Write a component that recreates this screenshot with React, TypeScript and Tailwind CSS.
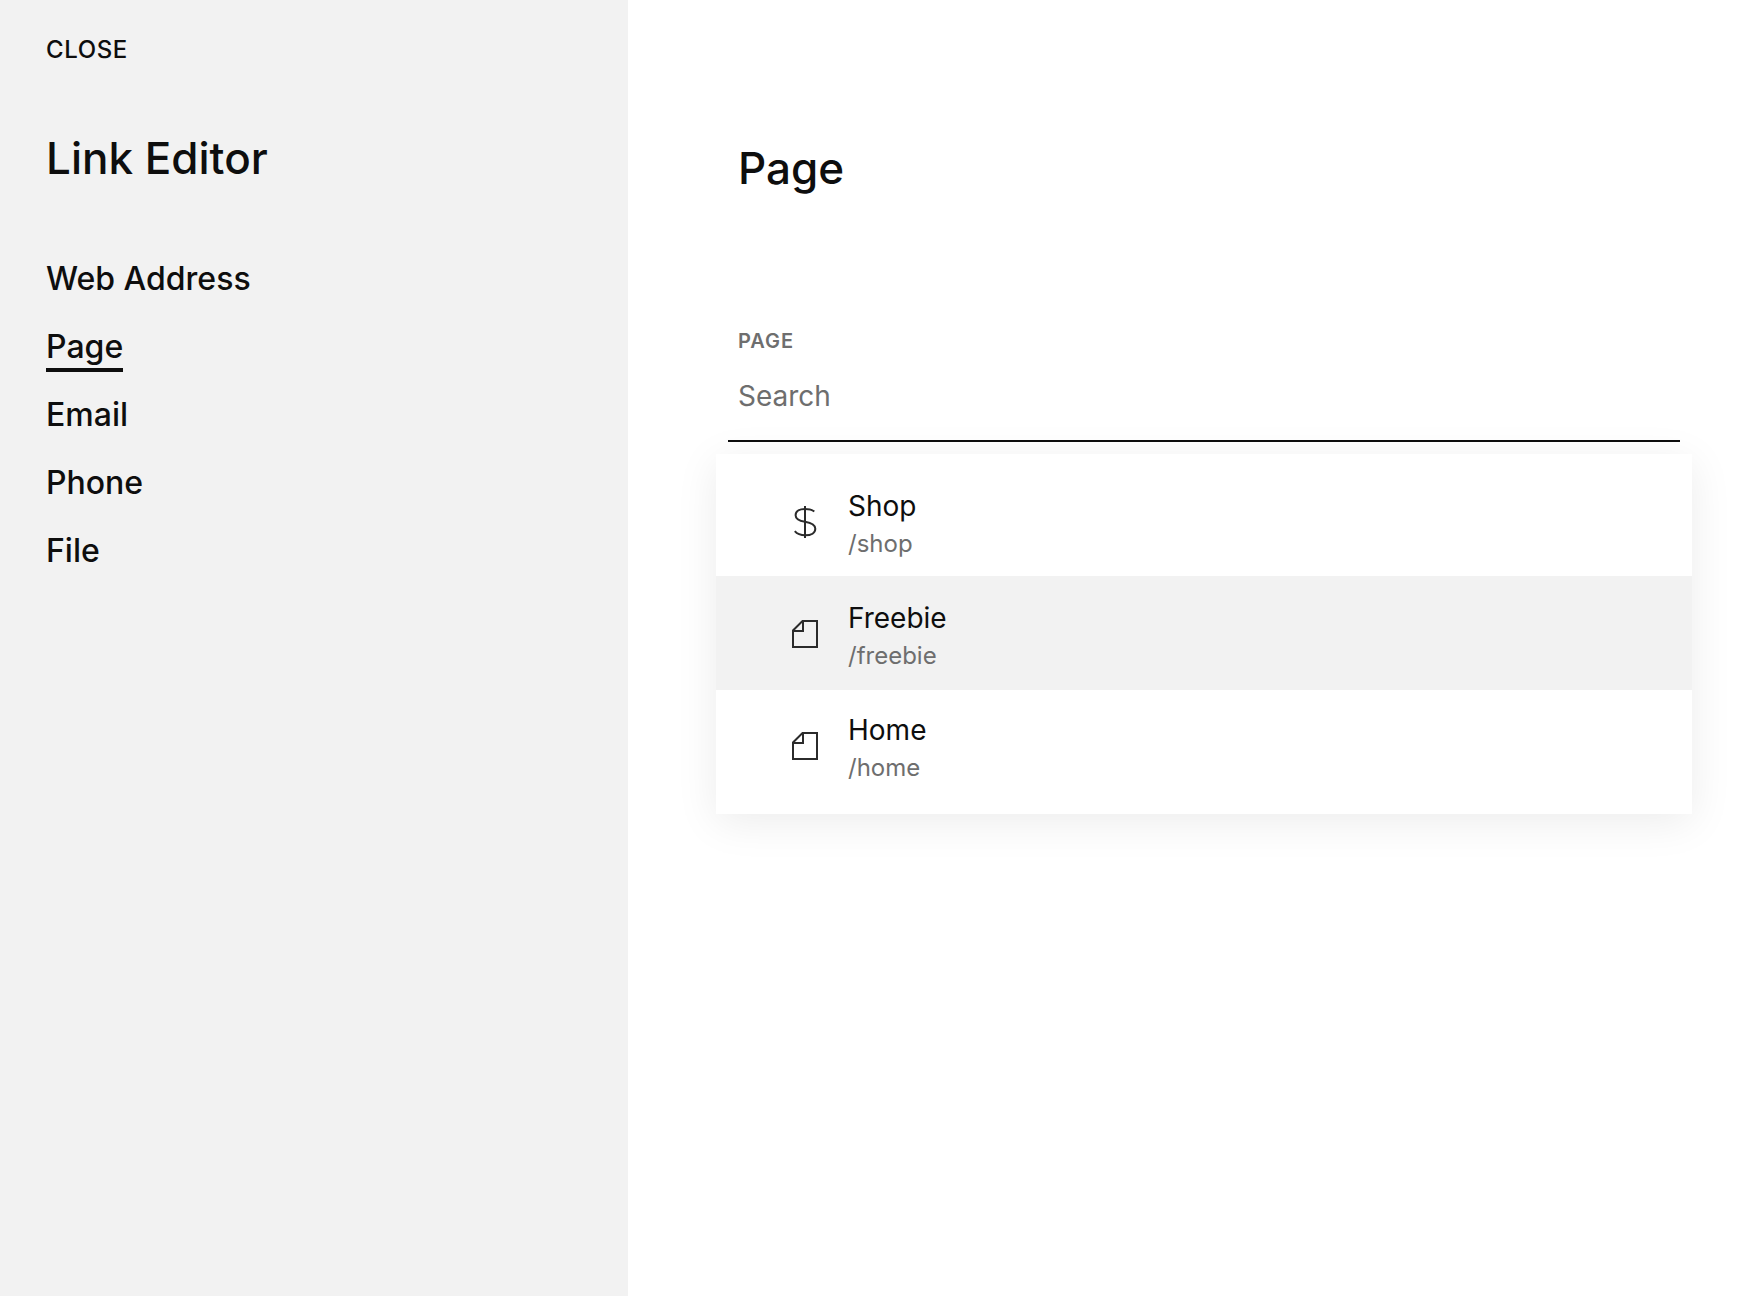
import { useState } from 'react';
import { clsx } from 'clsx';

interface PageOption {
  id: string;
  title: string;
  path: string;
  kind: 'store' | 'page';
}

const linkTypes = ['Web Address', 'Page', 'Email', 'Phone', 'File'];

const pages: PageOption[] = [
  { id: 'shop', title: 'Shop', path: '/shop', kind: 'store' },
  { id: 'freebie', title: 'Freebie', path: '/freebie', kind: 'page' },
  { id: 'home', title: 'Home', path: '/home', kind: 'page' },
];

function StoreIcon() {
  return (
    <svg className="w-8 h-[34px] shrink-0" viewBox="0 0 32 34" fill="none" stroke="#2b2b2b" strokeWidth="2" aria-hidden="true">
      <path d="M16 2v32" />
      <path d="M25.3 7.6C23.2 5.7 20 4.900 16 4.900c-5.600 0-9.400 2.400-9.400 6.300 0 4.200 4 5.700 9.400 6.600 6 1 10.300 2.600 10.300 7 0 4-4 6.500-10 6.500-4.600 0-8.300-1.400-10.500-4.100" />
    </svg>
  );
}

function PageIcon() {
  return (
    <svg className="w-8 h-[34px] shrink-0" viewBox="0 0 32 34" fill="none" stroke="#2b2b2b" strokeWidth="2" aria-hidden="true">
      <path d="M13.500 5H28v26H4V14.500z" />
      <path d="M14 5v10H4" />
    </svg>
  );
}

function Sidebar({ active, onSelect }: { active: string; onSelect: (type: string) => void }) {
  return (
    <aside className="w-[628px] shrink-0 bg-[#f2f2f2] pl-[46px] pt-[34px]">
      <button type="button" className="block text-2xl leading-8 font-medium tracking-wide">CLOSE</button>
      <h1 className="mt-[66px] text-[44px] leading-[52px] font-medium">Link Editor</h1>
      <nav className="mt-[75px] flex flex-col items-start gap-[23px]">
        {linkTypes.map((type) => (
          <a
            key={type}
            href="#"
            onClick={(e) => { e.preventDefault(); onSelect(type); }}
            className={clsx(
              'border-b-4 pb-px text-[32px] leading-10 font-medium',
              type === active ? 'border-[#0e0e0e]' : 'border-transparent'
            )}
          >
            {type}
          </a>
        ))}
      </nav>
    </aside>
  );
}

function PageRow({ page, highlighted, onHover }: { page: PageOption; highlighted: boolean; onHover: () => void }) {
  return (
    <li>
      <button
        type="button"
        onMouseEnter={onHover}
        className={clsx(
          'flex w-full h-[114px] items-center gap-[27px] pl-[73px] text-left',
          highlighted && 'bg-[#f2f2f2]'
        )}
      >
        {page.kind === 'store' ? <StoreIcon /> : <PageIcon />}
        <span className="flex flex-col pt-2">
          <span className="text-[28px] leading-[37px]">{page.title}</span>
          <span className="text-2xl leading-[38px] text-[#6e6e6e]">{page.path}</span>
        </span>
      </button>
    </li>
  );
}

export default function App() {
  const [linkType, setLinkType] = useState('Page');
  const [query, setQuery] = useState('');
  const [highlighted, setHighlighted] = useState('freebie');

  const results = pages.filter((page) => page.title.toLowerCase().includes(query.toLowerCase()));

  return (
    <div className="flex min-h-screen bg-white font-['Inter',sans-serif] text-[#0e0e0e]">
      <Sidebar active={linkType} onSelect={setLinkType} />
      <main className="min-w-0 flex-1 pt-[142px] pl-[100px] pr-[84px]">
        <h2 className="px-[10px] text-[44px] leading-[52px] font-medium">{linkType}</h2>
        <div className="relative mt-[135px]">
          <label htmlFor="page-search" className="block px-[10px] text-xl leading-6 font-semibold tracking-wider text-[#6e6e6e]">
            PAGE
          </label>
          <input
            id="page-search"
            type="text"
            value={query}
            onChange={(e) => setQuery(e.target.value)}
            placeholder="Search"
            autoComplete="off"
            className="block w-full h-[89px] border-b-2 border-[#0e0e0e] px-[10px] pb-[2px] text-[28px] outline-none placeholder:text-[#6e6e6e]"
          />
          <ul className="absolute top-full -inset-x-3 mt-3 -space-y-[2px] bg-white pt-[10px] pb-3 shadow-[0_8px_40px_rgba(0,0,0,0.08)]">
            {results.map((page) => (
              <PageRow
                key={page.id}
                page={page}
                highlighted={page.id === highlighted}
                onHover={() => setHighlighted(page.id)}
              />
            ))}
          </ul>
        </div>
      </main>
    </div>
  );
}
